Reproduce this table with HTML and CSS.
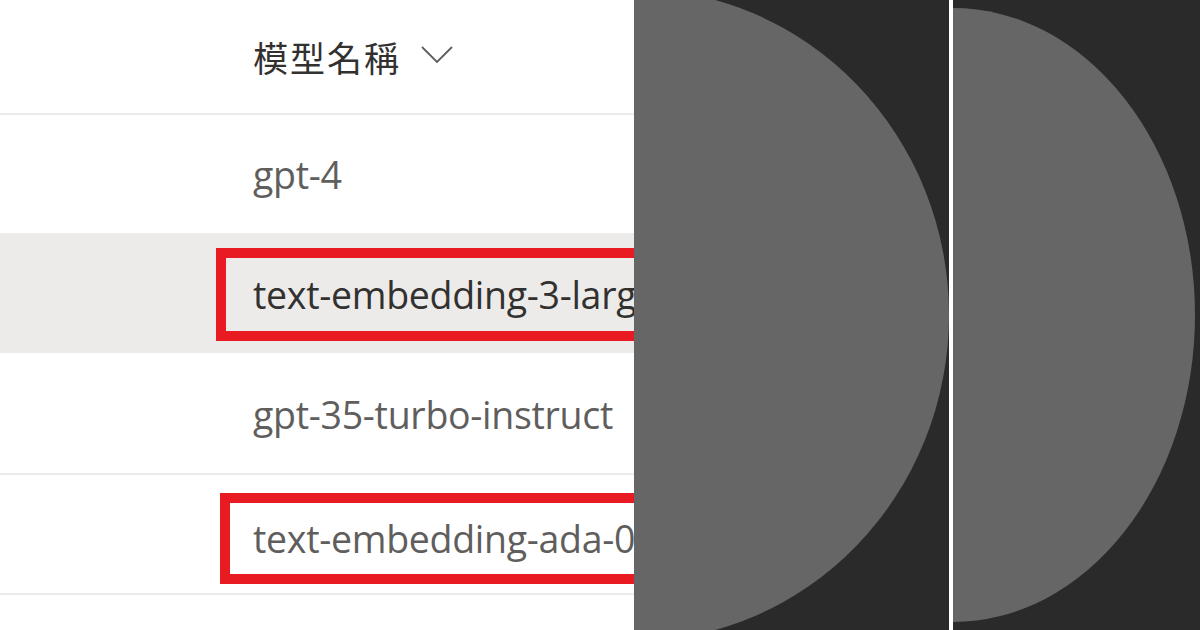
FILE: index.html
```html
<!DOCTYPE html>
<html lang="zh-Hant">
<head>
<meta charset="utf-8">
<title>模型名稱</title>
<link rel="stylesheet" href="styles.css">
</head>
<body>
<main class="stage">
  <section class="table">
    <div class="row head">
      <span class="cell title">模型名稱</span>
      <svg class="chev" width="32" height="20" viewBox="0 0 32 20"><path d="M1 2 L16 17 L31 2" fill="none" stroke="#605e5c" stroke-width="1.8"/></svg>
    </div>
    <div class="row"><span class="cell">gpt-4</span></div>
    <div class="row hover"><span class="cell mark mark-a">text-embedding-3-large</span></div>
    <div class="row"><span class="cell">gpt-35-turbo-instruct</span></div>
    <div class="row"><span class="cell mark mark-b">text-embedding-ada-002</span></div>
  </section>
  <section class="shapes">
    <div class="half half-a"></div>
    <div class="sep"></div>
    <div class="half half-b"></div>
  </section>
</main>
</body>
</html>
```
FILE: styles.css
```css
html, body {
  margin: 0;
  padding: 0;
  width: 1200px;
  height: 630px;
  overflow: hidden;
  background: #2a2a2a;
}
.stage {
  display: flex;
  width: 1200px;
  height: 630px;
}
.table {
  width: 634px;
  flex: none;
  background: #ffffff;
  overflow: hidden;
  font-family: "Open Sans", "Noto Sans CJK TC", sans-serif;
}
.row {
  height: 118px;
  border-bottom: 2px solid #edebe9;
  display: flex;
  align-items: center;
  padding-left: 253px;
  white-space: nowrap;
}
.row.head {
  height: 113px;
  gap: 20px;
}
.row.hover {
  background: #edebe9;
  border-bottom-color: #ffffff;
}
.cell {
  font-size: 37.5px;
  line-height: 45px;
  color: #605e5c;
  letter-spacing: -0.3px;
}
.title {
  font-family: "Noto Sans CJK TC", sans-serif;
  font-size: 35px;
  color: #323130;
  letter-spacing: 2px;
}
.chev {
  margin-top: -4px;
}
.hover .cell {
  color: #323130;
}
.mark {
  border: 10px solid #e81b23;
  padding-right: 40px;
}
.mark-a {
  margin-left: -37px;
  padding-left: 27px;
  padding-top: 14px;
  padding-bottom: 14px;
}
.mark-b {
  margin-left: -33px;
  padding-left: 23px;
  margin-top: 9px;
  padding-top: 13px;
  padding-bottom: 13px;
}
.shapes {
  flex: 1;
  display: flex;
  align-items: center;
  overflow: hidden;
  background: #2a2a2a;
}
.half {
  flex: none;
  background: #666666;
}
.half-a {
  width: 315px;
  height: 652px;
  border-radius: 0 315px 315px 0 / 0 326px 326px 0;
}
.sep {
  flex: none;
  width: 4px;
  height: 630px;
  background: #ffffff;
}
.half-b {
  width: 242px;
  height: 614px;
  border-radius: 0 242px 242px 0 / 0 307px 307px 0;
}
```
